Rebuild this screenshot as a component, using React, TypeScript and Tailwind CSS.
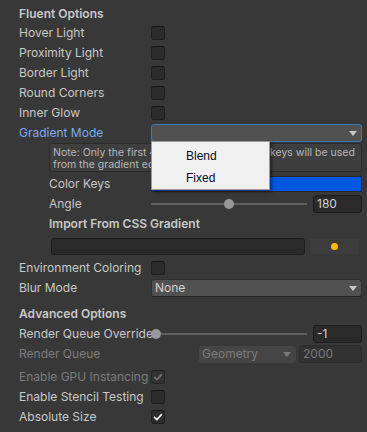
import React from "react";

const Check = ({ disabled }: { disabled?: boolean }) => (
  <svg width="14" height="14" viewBox="0 0 14 14" className="block">
    <path
      d="M3.6 7.4 L5.9 9.6 L10.4 4.6"
      fill="none"
      stroke={disabled ? "#8a8a8a" : "#f2f2f2"}
      strokeWidth="1.6"
      strokeLinecap="round"
      strokeLinejoin="round"
    />
  </svg>
);

const Checkbox = ({ checked, disabled }: { checked?: boolean; disabled?: boolean }) => (
  <div
    className={`h-[14px] w-[14px] -mt-[1px] rounded-[3px] border border-[#1e1e1e] border-t-[#151515] ${
      disabled ? "bg-[#323232] opacity-70" : "bg-[#2c2c2c]"
    }`}
  >
    {checked && (
      <div className="-ml-px -mt-px">
        <Check disabled={disabled} />
      </div>
    )}
  </div>
);

const Arrow = ({ dim }: { dim?: boolean }) => (
  <svg width="8" height="5" viewBox="0 0 8 5" className="block">
    <path d="M0 0 H8 L4 5 Z" fill={dim ? "#7a7a7a" : "#c8c8c8"} />
  </svg>
);

const Dropdown = ({ value, focused }: { value?: string; focused?: boolean }) => (
  <div
    className={`flex h-[18px] flex-1 items-center justify-between rounded-[3px] border pl-[3px] pr-[4px] bg-[#515151] ${
      focused ? "border-[#3a79bb]" : "border-[#303030] border-b-[#242424]"
    }`}
  >
    <span className="text-[#d2d2d2]">{value}</span>
    <Arrow />
  </div>
);

const NumberField = ({ value, dim, w }: { value: string; dim?: boolean; w: string }) => (
  <div
    className={`flex h-[18px] items-center rounded-[3px] border pl-[3px] ${w} ${
      dim ? "border-[#2c2c2c] bg-[#323232] text-[#7a7a7a]" : "border-[#1c1c1c] bg-[#2a2a2a] text-[#d2d2d2]"
    }`}
  >
    {value}
  </div>
);

const Slider = ({ t }: { t: number }) => (
  <div className="relative h-[20px] flex-1">
    <div className="absolute left-0 right-0 top-[9px] h-[2px] bg-[#5e5e5e]" />
    <div
      className="absolute top-[5px] h-[10px] w-[10px] rounded-full bg-[#999999]"
      style={{ left: `calc(${t} * (100% - 10px))` }}
    />
  </div>
);

const Row = ({
  label,
  indent,
  tone,
  children,
  className = "",
}: {
  label: string;
  indent?: boolean;
  tone?: "blue" | "dim";
  children?: React.ReactNode;
  className?: string;
}) => (
  <div className={`flex h-[20px] items-center ${indent ? "pl-[30px]" : ""} ${className}`}>
    <div
      className={`shrink-0 whitespace-nowrap ${indent ? "w-[102px]" : "w-[132px]"} ${
        tone === "blue" ? "text-[#7babf0]" : tone === "dim" ? "text-[#7c7c7c]" : "text-[#c8c8c8]"
      }`}
    >
      {label}
    </div>
    {children}
  </div>
);

const Header = ({ children, className = "" }: { children: React.ReactNode; className?: string }) => (
  <div className={`flex h-[18px] items-center font-semibold text-[#c8c8c8] ${className}`}>{children}</div>
);

export default function App() {
  return (
    <div
      className="relative h-[432px] w-[367px] overflow-hidden bg-[#383838] pl-[19px] pr-[5px] pt-[5px] text-[12px] leading-none"
      style={{ fontFamily: "Inter, 'Noto Sans', sans-serif" }}
    >
      <Header>Fluent Options</Header>
      <Row label="Hover Light">
        <Checkbox />
      </Row>
      <Row label="Proximity Light">
        <Checkbox />
      </Row>
      <Row label="Border Light">
        <Checkbox />
      </Row>
      <Row label="Round Corners">
        <Checkbox />
      </Row>
      <Row label="Inner Glow">
        <Checkbox />
      </Row>
      <Row label="Gradient Mode" tone="blue">
        <Dropdown focused />
      </Row>

      {/* the open popup hides the middle of the first line */}
      <div className="ml-[30px] h-[29px] rounded-[3px] border border-[#2a2a2a] bg-[#3e3e3e] pl-[3px] pt-[3px] text-[10.5px] leading-[11.7px] text-[#b8b8b8] whitespace-nowrap">
        <div className="flex">
          <span className="w-[217px] shrink-0 overflow-hidden">Note: Only the first 4 alpha and color</span>
          <span>keys will be used</span>
        </div>
        <div>from the gradient editor.</div>
      </div>

      <Row label="Color Keys" indent className="mt-[2px]">
        <div className="h-[16px] flex-1 border border-[#2a2a2a] bg-[#0057e0]" />
      </Row>
      <Row label="Angle" indent>
        <Slider t={0.5} />
        <div className="ml-[6px]">
          <NumberField value="180" w="w-[49px]" />
        </div>
      </Row>
      <div className="flex h-[20px] items-center pl-[30px] font-semibold text-[#c8c8c8]">Import From CSS Gradient</div>
      <div className="mt-[2px] flex h-[20px] items-center pl-[32px]">
        <div className="h-[17px] flex-1 rounded-[3px] border border-[#1c1c1c] bg-[#2a2a2a]" />
        <div className="ml-[5px] mr-[3px] flex h-[15px] w-[49px] items-center justify-center bg-[#3c3c3c]">
          <div className="h-[7px] w-[7px] rounded-full bg-[#ffbb00]" />
        </div>
      </div>

      <Row label="Environment Coloring" className="mt-[2px]">
        <Checkbox />
      </Row>
      <Row label="Blur Mode">
        <Dropdown value="None" />
      </Row>

      <Header className="mt-[7px]">Advanced Options</Header>
      <Row label="Render Queue Override" className="mt-[1px]">
        <Slider t={0} />
        <div className="ml-[6px]">
          <NumberField value="-1" w="w-[49px]" />
        </div>
      </Row>
      <div className="flex h-[20px] items-center">
        <div className="w-[180px] shrink-0 whitespace-nowrap text-[#7c7c7c]">Render Queue</div>
        <div className="flex h-[17px] w-[97px] items-center justify-between rounded-[3px] bg-[#454545] pl-[3px] pr-[5px] text-[#7c7c7c]">
          <span>Geometry</span>
          <Arrow dim />
        </div>
        <div className="ml-[3px] flex-1">
          <NumberField value="2000" dim w="w-full" />
        </div>
      </div>
      <Row label="Enable GPU Instancing" tone="dim" className="mt-[3px]">
        <Checkbox checked disabled />
      </Row>
      <Row label="Enable Stencil Testing">
        <Checkbox />
      </Row>
      <Row label="Absolute Size">
        <Checkbox checked />
      </Row>

      <div
        className="absolute left-[151px] top-[141px] h-[49px] w-[119px] border border-[#9a9a9a] bg-[#f0f0f0] shadow-[2px_2px_3px_rgba(0,0,0,0.45)] text-[12px] text-[#0a0a1a]"
        style={{ fontFamily: "'Liberation Sans', Arial, sans-serif" }}
      >
        <div className="flex h-[20px] items-end pl-[34px]">Blend</div>
        <div className="flex h-[22px] items-end pl-[34px]">Fixed</div>
      </div>
    </div>
  );
}
